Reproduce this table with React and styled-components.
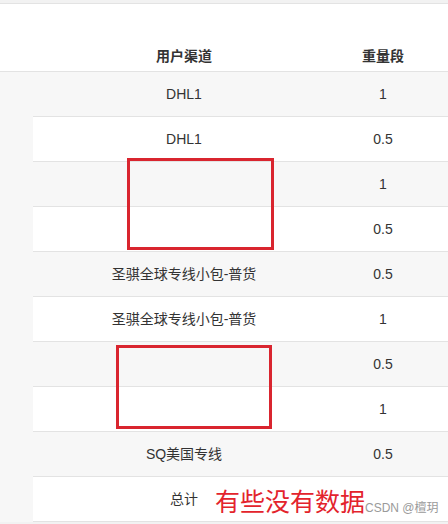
import React from "react";
import styled, { createGlobalStyle } from "styled-components";

const Global = createGlobalStyle`
  html, body { margin: 0; padding: 0; background: #fff; }
  body { font-family: "Liberation Sans", "Noto Sans CJK SC", sans-serif; }
`;

const Page = styled.div`
  position: relative;
  width: 448px;
  height: 524px;
  overflow: hidden;
  background: #f2f2f2;
  font-size: 14px;
  color: #333;
`;

const TopStrip = styled.div`
  height: 3px;
  background: #f2f2f2;
  border-bottom: 1px solid #e3e3e3;
`;

const HeaderRow = styled.div`
  display: grid;
  grid-template-columns: 33px 302px 96px 1fr;
  height: 67px;
  background: #fff;
  border-bottom: 1px solid #e3e3e3;
  align-items: end;
`;

const HeadCell = styled.div`
  text-align: center;
  font-weight: bold;
  color: #333;
  line-height: 20px;
  padding-bottom: 5px;
`;

const Body = styled.div`
  display: flex;
  background: #fff;
`;

const SideCol = styled.div`
  width: 33px;
  background: #f7f7f7;
`;

const Rows = styled.div`
  flex: 1;
`;

const Row = styled.div`
  display: grid;
  grid-template-columns: 302px 96px 1fr;
  height: 44px;
  align-items: center;
  background: ${(p) => (p.$striped ? "#f7f7f7" : "#fff")};
  border-bottom: 1px solid #e3e3e3;
`;

const Cell = styled.div`
  text-align: center;
  color: #333;
  line-height: 20px;
  white-space: nowrap;
`;

const Mark = styled.div`
  position: absolute;
  border: 3px solid #d9252f;
  box-sizing: border-box;
`;

const Note = styled.div`
  position: absolute;
  left: 215px;
  top: 485px;
  font-family: "Noto Sans CJK SC", sans-serif;
  font-size: 25px;
  line-height: 30px;
  color: #e3232c;
  white-space: nowrap;
`;

const Watermark = styled.div`
  position: absolute;
  left: 365px;
  top: 500px;
  font-family: "Liberation Sans", "Noto Sans CJK SC", sans-serif;
  font-size: 12px;
  line-height: 16px;
  color: #9a9a9a;
  white-space: nowrap;
  text-shadow: 0 0 1px #fff;
`;

const rows = [
  ["DHL1", "1"],
  ["DHL1", "0.5"],
  ["", "1"],
  ["", "0.5"],
  ["圣骐全球专线小包-普货", "0.5"],
  ["圣骐全球专线小包-普货", "1"],
  ["", "0.5"],
  ["", "1"],
  ["SQ美国专线", "0.5"],
  ["总计", ""],
];

export default function App() {
  return (
    <Page>
      <Global />
      <TopStrip />
      <HeaderRow>
        <span />
        <HeadCell>用户渠道</HeadCell>
        <HeadCell>重量段</HeadCell>
        <span />
      </HeaderRow>
      <Body>
        <SideCol />
        <Rows>
          {rows.map(([ch, w], i) => (
            <Row key={i} $striped={i % 2 === 0}>
              <Cell>{ch}</Cell>
              <Cell>{w}</Cell>
              <span />
            </Row>
          ))}
        </Rows>
      </Body>
      <Mark style={{ left: 127, top: 158, width: 147, height: 92 }} />
      <Mark style={{ left: 116, top: 345, width: 156, height: 84 }} />
      <Note>有些没有数据</Note>
      <Watermark>CSDN @檀玥</Watermark>
    </Page>
  );
}
